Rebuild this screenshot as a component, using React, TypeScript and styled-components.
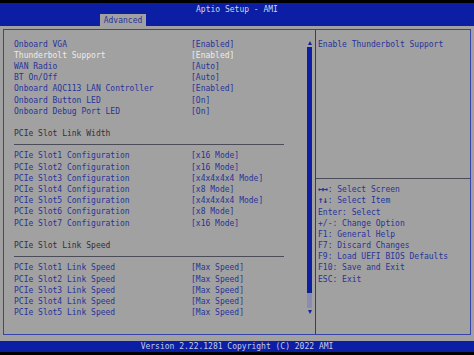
import styled, { createGlobalStyle } from "styled-components";

const ROW = 11.2;

const Global = createGlobalStyle`
  html, body { margin: 0; padding: 0; background: #000; }
  body { font-family: "DejaVu Sans Mono", "Liberation Mono", monospace; }
`;

const Screen = styled.div`
  width: 474px;
  height: 355px;
  display: flex;
  flex-direction: column;
  background: #000;
  overflow: hidden;
`;

const Header = styled.div`
  margin-top: 3px;
  height: 23px;
  background: #0c1fa4;
  display: flex;
  flex-direction: column;
`;

const Title = styled.div`
  height: 11px;
  line-height: 13px;
  text-align: center;
  color: #d2d6e2;
  font-size: 8px;
`;

const TabBar = styled.div`
  flex: 1;
  display: flex;
  padding-left: 100px;
`;

const Tab = styled.div`
  width: 46px;
  background: #a1a1a1;
  color: #2a3396;
  font-size: 8px;
  line-height: 13px;
  text-align: center;
`;

const Main = styled.div`
  height: 315px;
  background: #a1a1a1;
  padding: 3px 3px 6px 3px;
  box-sizing: border-box;
  display: flex;
`;

const Frame = styled.div`
  flex: 1;
  display: flex;
  border: 1px solid #3a44a8;
`;

const LeftPanel = styled.div`
  width: 311px;
  display: flex;
  border-right: 1px solid #2a36a6;
`;

const List = styled.div`
  flex: 1;
  padding: 8.6px 0 0 10px;
`;

const Row = styled.div<{ $selected?: boolean }>`
  height: ${ROW}px;
  line-height: ${ROW}px;
  display: flex;
  font-size: 8px;
  color: ${(p) => (p.$selected ? "#ececec" : "#28339a")};
  white-space: pre;
`;

const Label = styled.span`
  width: 177px;
`;

const Heading = styled(Row)`
  color: #30303c;
`;

const Separator = styled.div<{ $width?: number }>`
  height: ${ROW}px;
  display: flex;
  align-items: center;
  &::after {
    content: "";
    display: block;
    width: ${(p) => (p.$width ? `${p.$width}px` : "100%")};
    height: 1px;
    background: #4c4c58;
  }
`;

const Scroll = styled.div`
  width: 5px;
  margin: 9px 3px 18px 0;
  display: flex;
  flex-direction: column;
  align-items: center;
`;

const Arrow = styled.div<{ $down?: boolean }>`
  width: 0;
  height: 0;
  margin: 2px 0;
  border-left: 2.5px solid transparent;
  border-right: 2.5px solid transparent;
  ${(p) =>
    p.$down ? "border-top: 4px solid #1422a0;" : "border-bottom: 4px solid #1422a0;"}
`;

const Thumb = styled.div`
  width: 5px;
  flex: 1;
  background: #0e1ea2;
`;

const Track = styled.div`
  width: 5px;
  height: 15px;
  background: #8a8cb4;
`;

const RightPanel = styled.div`
  flex: 1;
  display: flex;
  flex-direction: column;
  padding-top: 8.6px;
`;

const HelpText = styled(Row)`
  padding-left: 2px;
`;

const KeyGlyph = styled.span`
  font-size: 9px;
  font-weight: bold;
  letter-spacing: -0.6px;
`;

const HelpArea = styled.div`
  height: ${ROW * 12}px;
`;

const Footer = styled.div`
  height: 11px;
  background: #0c1fa4;
  color: #c4cae6;
  font-size: 8px;
  line-height: 12px;
  text-align: center;
`;

const settings: [string, string, boolean?][] = [
  ["Onboard VGA", "[Enabled]"],
  ["Thunderbolt Support", "[Enabled]", true],
  ["WAN Radio", "[Auto]"],
  ["BT On/Off", "[Auto]"],
  ["Onboard AQC113 LAN Controller", "[Enabled]"],
  ["Onboard Button LED", "[On]"],
  ["Onboard Debug Port LED", "[On]"],
];

const widths = ["[x16 Mode]", "[x16 Mode]", "[x4x4x4x4 Mode]", "[x8 Mode]", "[x4x4x4x4 Mode]", "[x8 Mode]", "[x16 Mode]"];

const keys: [string, string][] = [
  ["↤↦", ": Select Screen"],
  ["↑↓", ": Select Item"],
  ["", "Enter: Select"],
  ["", "+/-: Change Option"],
  ["", "F1: General Help"],
  ["", "F7: Discard Changes"],
  ["", "F9: Load UEFI BIOS Defaults"],
  ["", "F10: Save and Exit"],
  ["", "ESC: Exit"],
];

export default function App() {
  return (
    <Screen>
      <Global />
      <Header>
        <Title>Aptio Setup - AMI</Title>
        <TabBar>
          <Tab>Advanced</Tab>
        </TabBar>
      </Header>
      <Main>
        <Frame>
          <LeftPanel>
            <List>
              {settings.map(([l, v, s]) => (
                <Row key={l} $selected={s}>
                  <Label>{l}</Label>
                  {v}
                </Row>
              ))}
              <Row />
              <Heading>PCIe Slot Link Width</Heading>
              <Separator $width={270} />
              {widths.map((v, i) => (
                <Row key={i}>
                  <Label>{`PCIe Slot${i + 1} Configuration`}</Label>
                  {v}
                </Row>
              ))}
              <Row />
              <Heading>PCIe Slot Link Speed</Heading>
              <Separator $width={270} />
              {[1, 2, 3, 4, 5].map((n) => (
                <Row key={n}>
                  <Label>{`PCIe Slot${n} Link Speed`}</Label>
                  [Max Speed]
                </Row>
              ))}
            </List>
            <Scroll>
              <Arrow />
              <Thumb />
              <Track />
              <Arrow $down />
            </Scroll>
          </LeftPanel>
          <RightPanel>
            <HelpArea>
              <HelpText>Enable Thunderbolt Support</HelpText>
            </HelpArea>
            <Separator />
            {keys.map(([g, t]) => (
              <HelpText key={t}>
                {g && <KeyGlyph>{g}</KeyGlyph>}
                {t}
              </HelpText>
            ))}
          </RightPanel>
        </Frame>
      </Main>
      <Footer>Version 2.22.1281 Copyright (C) 2022 AMI</Footer>
    </Screen>
  );
}
